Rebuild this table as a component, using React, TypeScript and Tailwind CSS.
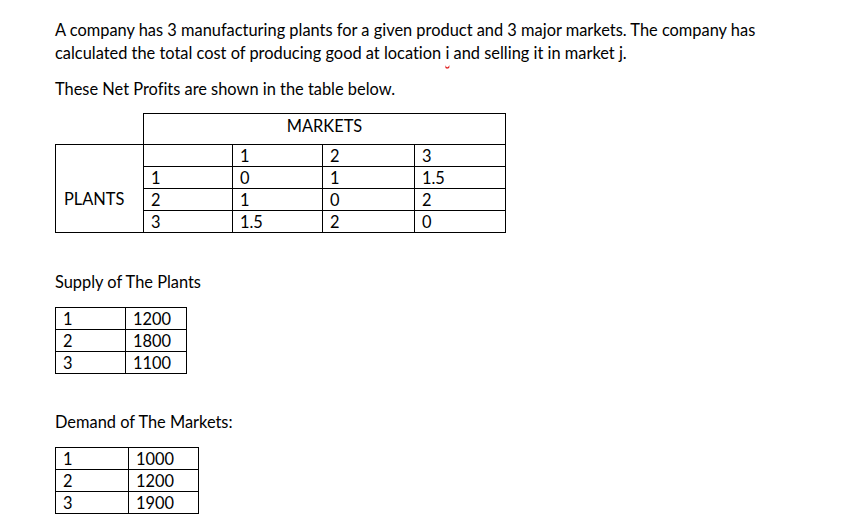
const PROFITS = [
  { plant: '1', values: ['0', '1', '1.5'] },
  { plant: '2', values: ['1', '0', '2'] },
  { plant: '3', values: ['1.5', '2', '0'] },
];

const SUPPLY = [
  ['1', '1200'],
  ['2', '1800'],
  ['3', '1100'],
];

const DEMAND = [
  ['1', '1000'],
  ['2', '1200'],
  ['3', '1900'],
];

const cell = 'border border-black align-middle pl-[7px] h-[22px] leading-[20px] p-0';

function SmallTable({ rows, widths }: { rows: string[][]; widths: [string, string] }) {
  return (
    <table className="border-collapse table-fixed">
      <colgroup>
        <col className={widths[0]} />
        <col className={widths[1]} />
      </colgroup>
      <tbody>
        {rows.map(([k, v]) => (
          <tr key={k}>
            <td className={cell}>{k}</td>
            <td className={cell}>{v}</td>
          </tr>
        ))}
      </tbody>
    </table>
  );
}

export default function App() {
  return (
    <div
      className="min-h-screen bg-white text-black text-[16.4px] leading-[23px] [font-variant-ligatures:none]"
      style={{ fontFamily: 'Lato, "Open Sans", sans-serif' }}
    >
      <div className="pl-[55px] pt-[18px]">
        <p className="whitespace-nowrap">
          A company has 3 manufacturing plants for a given product and 3 major markets. The company has
          <br />
          calculated the total cost of producing good at location{' '}
          <span className="underline decoration-wavy decoration-[#e02020] underline-offset-[4px]">i</span> and
          selling it in market j.
        </p>
        <p className="mt-[13px]">These Net Profits are shown in the table below.</p>

        {/* Net profit table */}
        <table className="mt-[13px] border-collapse table-fixed">
          <colgroup>
            <col className="w-[88px]" />
            <col className="w-[89px]" />
            <col className="w-[90px]" />
            <col className="w-[92px]" />
            <col className="w-[91px]" />
          </colgroup>
          <tbody>
            <tr>
              <td className="p-0 h-[31px]" />
              <td colSpan={4} className="border border-black p-0 pt-[1px] align-top text-center leading-[22px]">
                MARKETS
              </td>
            </tr>
            <tr>
              <td rowSpan={4} className="border border-black p-0 pl-[8px] pt-[44px] align-top leading-[20px]">
                PLANTS
              </td>
              <td className={cell} />
              <td className={cell}>1</td>
              <td className={cell}>2</td>
              <td className={cell}>3</td>
            </tr>
            {PROFITS.map((r) => (
              <tr key={r.plant}>
                <td className={cell}>{r.plant}</td>
                {r.values.map((v, i) => (
                  <td key={i} className={cell}>
                    {v}
                  </td>
                ))}
              </tr>
            ))}
          </tbody>
        </table>

        <p className="mt-[37px]">Supply of The Plants</p>
        <div className="mt-[14px]">
          <SmallTable rows={SUPPLY} widths={['w-[70px]', 'w-[61px]']} />
        </div>

        <p className="mt-[36px]">Demand of The Markets:</p>
        <div className="mt-[14px]">
          <SmallTable rows={DEMAND} widths={['w-[73px]', 'w-[70px]']} />
        </div>
      </div>
    </div>
  );
}
